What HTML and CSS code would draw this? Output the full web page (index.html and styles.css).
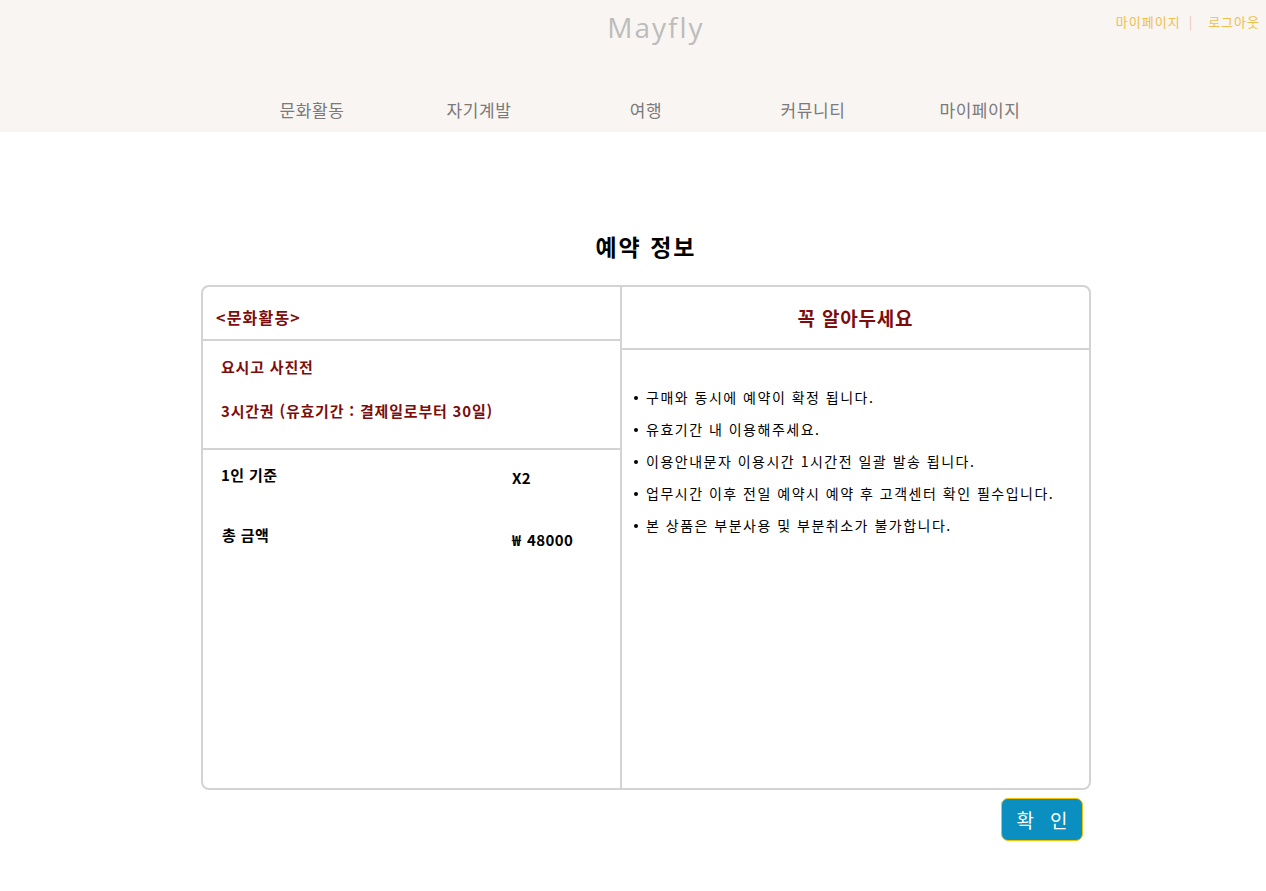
FILE: index.html
```html
<!DOCTYPE html>
<html lang="ko">
<head>
<meta charset="utf-8">
<title>Mayfly - 예약 정보</title>
<link rel="stylesheet" href="styles.css">
</head>
<body>
<header class="site-header">
  <div class="brand">Mayfly</div>
  <div class="user-links"><a href="#">마이페이지</a><span class="sep">|</span><a href="#">로그아웃</a></div>
  <nav class="main-nav">
    <a href="#">문화활동</a>
    <a href="#">자기계발</a>
    <a href="#">여행</a>
    <a href="#">커뮤니티</a>
    <a href="#">마이페이지</a>
  </nav>
</header>
<main class="page">
  <h1 class="page-title">예약 정보</h1>
  <section class="info-box">
    <div class="col-left">
      <div class="cat-row">&lt;문화활동&gt;</div>
      <div class="product-row">
        <p class="prod-name">요시고 사진전</p>
        <p class="prod-ticket">3시간권 (유효기간 : 결제일로부터 30일)</p>
      </div>
      <div class="price-row">
        <div class="price-line">
          <span class="label">1인 기준</span>
          <span class="value">X2</span>
        </div>
        <div class="price-line total">
          <span class="label">총 금액</span>
          <span class="value">₩ 48000</span>
        </div>
      </div>
    </div>
    <div class="col-right">
      <div class="notice-head">꼭 알아두세요</div>
      <ul class="notice-list">
        <li>구매와 동시에 예약이 확정 됩니다.</li>
        <li>유효기간 내 이용해주세요.</li>
        <li>이용안내문자 이용시간 1시간전 일괄 발송 됩니다.</li>
        <li>업무시간 이후 전일 예약시 예약 후 고객센터 확인 필수입니다.</li>
        <li>본 상품은 부분사용 및 부분취소가 불가합니다.</li>
      </ul>
    </div>
  </section>
  <div class="actions"><button class="btn-confirm">확&nbsp;&nbsp;&nbsp;인</button></div>
</main>
</body>
</html>
```
FILE: styles.css
```css
* { box-sizing: border-box; }
body {
  margin: 0;
  font-family: "Noto Sans CJK KR", "Noto Sans", sans-serif;
  background: #fff;
  color: #000;
}
.site-header {
  position: relative;
  height: 132px;
  background: #f9f5f2;
}
.brand {
  text-align: center;
  padding-top: 8px;
  padding-left: 46px;
  font-family: "Open Sans", "Noto Sans", sans-serif;
  font-size: 28px;
  letter-spacing: 2px;
  color: #bdbcbb;
  line-height: 38px;
}
.user-links {
  position: absolute;
  top: 12px;
  right: 6px;
  font-size: 13px;
  letter-spacing: 1px;
  color: #eec04a;
}
.user-links a { color: #eec04a; text-decoration: none; }
.user-links .sep { margin: 0 15px 0 8px; color: #e8c8a8; }
.main-nav {
  display: flex;
  justify-content: center;
  padding-left: 26px;
  margin-top: 52px;
}
.main-nav a {
  width: 167px;
  text-align: center;
  font-size: 17px;
  letter-spacing: 0.6px;
  color: #7a7a7a;
  text-decoration: none;
  line-height: 24px;
}
.page {
  padding-left: 26px;
  display: flex;
  flex-direction: column;
  align-items: center;
}
.page-title {
  margin: 97px 0 0;
  font-size: 23px;
  letter-spacing: 2px;
  font-weight: 700;
  line-height: 34px;
}
.info-box {
  margin-top: 22px;
  width: 890px;
  height: 505px;
  border: 2px solid #d3d3d3;
  border-radius: 8px;
  display: flex;
}
.col-left {
  width: 419px;
  border-right: 2px solid #d3d3d3;
  display: flex;
  flex-direction: column;
}
.cat-row {
  height: 54px;
  border-bottom: 2px solid #d3d3d3;
  padding: 18px 0 0 13px;
  font-size: 16px;
  letter-spacing: 1.2px;
  font-weight: 700;
  color: #7d0d0d;
  line-height: 24px;
}
.product-row {
  height: 109px;
  border-bottom: 2px solid #d3d3d3;
  padding: 14px 0 0 18px;
  color: #7d0d0d;
}
.product-row p {
  margin: 0;
  font-size: 15px;
  letter-spacing: 0.8px;
  font-weight: 700;
  line-height: 24px;
}
.product-row .prod-ticket { margin-top: 20px; }
.price-row { padding: 13px 0 0 18px; }
.price-line {
  display: flex;
  font-size: 15px;
  font-weight: 700;
  line-height: 24px;
  letter-spacing: 0.4px;
}
.price-line .label { width: 291px; }
.price-line .value { padding-top: 3px; }
.price-line.total { margin-top: 33px; }
.price-line.total .label { padding-left: 1px; }
.price-line.total .value { padding-top: 5px; word-spacing: 2px; }
.col-right { flex: 1; }
.notice-head {
  height: 63px;
  border-bottom: 2px solid #d3d3d3;
  text-align: center;
  font-size: 19px;
  letter-spacing: 0.8px;
  font-weight: 700;
  color: #7d0d0d;
  padding-top: 17px;
  line-height: 28px;
}
.notice-list {
  margin: 31px 0 0;
  padding: 0 0 0 24px;
  list-style: none;
  font-size: 14px;
  letter-spacing: 1.5px;
  line-height: 32px;
}
.notice-list li { position: relative; }
.notice-list li::before {
  content: "";
  position: absolute;
  left: -12px;
  top: 15px;
  width: 4px;
  height: 4px;
  border-radius: 50%;
  background: #000;
}
.actions {
  width: 890px;
  display: flex;
  justify-content: flex-end;
  padding-right: 8px;
  margin-top: 8px;
}
.btn-confirm {
  width: 82px;
  height: 43px;
  background: #0a8fc0;
  border: 1px solid #f2c200;
  border-radius: 7px;
  color: #fff;
  font-family: "Noto Sans CJK KR", sans-serif;
  font-size: 19px;
  line-height: 1;
  padding: 0;
}
```
